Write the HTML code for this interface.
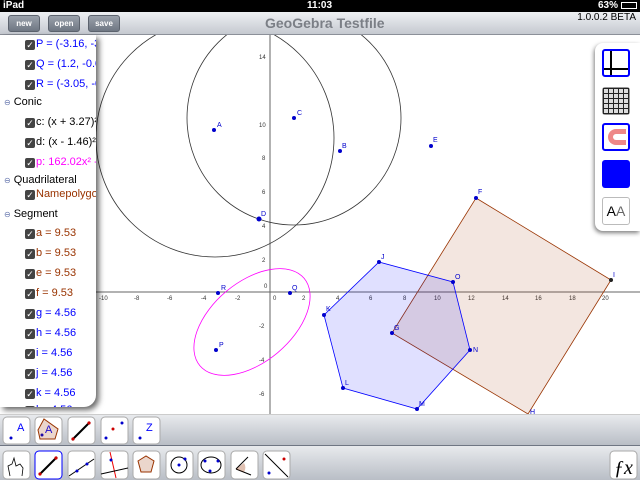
<!DOCTYPE html>
<html><head><meta charset="utf-8"><style>
*{margin:0;padding:0;box-sizing:border-box}
body{width:640px;height:480px;overflow:hidden;position:relative;background:#fff;font-family:"Liberation Sans",sans-serif}
.status{position:absolute;left:0;top:0;width:640px;height:12px;background:#000;color:#fff;font-size:10px;font-weight:bold}
.top{position:absolute;left:0;top:12px;width:640px;height:23px;background:linear-gradient(#eef0f3,#c5c9d0);border-bottom:1px solid #8c9099}
.btn{position:absolute;top:3px;height:17px;width:32px;border-radius:3px;background:linear-gradient(#9aa1ab,#6f7783);border:1px solid #5c636e;color:#fff;font-size:8px;font-weight:bold;text-align:center;line-height:15px}
.title{position:absolute;left:265px;top:3px;font-size:14px;font-weight:bold;color:#7b7f86}
.ver{position:absolute;right:4px;top:0;font-size:10px;color:#000}
.panel{position:absolute;left:0;top:35px;width:96px;height:372px;background:#fff;border-bottom-right-radius:12px;box-shadow:3px 3px 6px rgba(0,0,0,.6);overflow:hidden;font-size:11px}
.row{position:absolute;left:25px;white-space:nowrap}
.cb{display:inline-block;width:10px;height:10px;background:#444;border-radius:2px;color:#fff;font-size:9px;line-height:10px;text-align:center;vertical-align:-1px;margin-right:1px}
.hd{position:absolute;left:4px;color:#000;font-size:11px}
.hd b{font-weight:normal;color:#6a7ab0;font-size:8px;margin-right:3px}
.side{position:absolute;left:595px;top:43px;width:45px;height:188px;background:#fff;border-radius:8px 0 0 8px;box-shadow:-1px 2px 4px rgba(0,0,0,.5)}
.bar{position:absolute;left:0;width:640px;background:linear-gradient(#e8eaed,#b9bec6)}
</style></head><body>
<div class="status"><span style="position:absolute;left:3px">iPad</span><span style="position:absolute;left:307px">11:03</span><span style="position:absolute;right:22px">63%</span><span style="position:absolute;right:3px;top:2px;width:16px;height:7px;border:1px solid #fff"></span></div>
<div class="top"><div class="btn" style="left:8px">new</div><div class="btn" style="left:48px">open</div><div class="btn" style="left:88px">save</div><div class="title">GeoGebra Testfile</div><div class="ver">1.0.0.2 BETA</div></div>

<svg style="position:absolute;left:0;top:35px" width="640" height="379" viewBox="0 35 640 379">
<g font-size="6" fill="#333" font-family="Liberation Sans">
<line x1="90" y1="292" x2="640" y2="292" stroke="#666"/>
<line x1="270" y1="35" x2="270" y2="414" stroke="#666"/>
<text x="99" y="300">-10</text><text x="134" y="300">-8</text><text x="167" y="300">-6</text><text x="201" y="300">-4</text><text x="235" y="300">-2</text><text x="273" y="300">0</text><text x="302" y="300">2</text><text x="336" y="300">4</text><text x="369" y="300">6</text><text x="403" y="300">8</text><text x="434" y="300">10</text><text x="468" y="300">12</text><text x="502" y="300">14</text><text x="535" y="300">16</text><text x="569" y="300">18</text><text x="602" y="300">20</text>
<text x="259" y="59">14</text><text x="259" y="127">10</text><text x="262" y="160">8</text><text x="262" y="194">6</text><text x="262" y="228">4</text><text x="262" y="262">2</text><text x="264" y="288">0</text><text x="259" y="328">-2</text><text x="259" y="362">-4</text><text x="259" y="396">-6</text>
</g>
<circle cx="215" cy="138" r="119" fill="none" stroke="#333" stroke-width=".8"/>
<circle cx="294" cy="118" r="107" fill="none" stroke="#333" stroke-width=".8"/>
<ellipse cx="252" cy="322" rx="68" ry="40" transform="rotate(-40 252 322)" fill="none" stroke="#f0f" stroke-width=".8"/>
<polygon points="476,198 611,280 528,414 392,333" fill="rgba(153,51,0,.12)" stroke="#993300" stroke-width=".8"/>
<polygon points="379,262 453,282 470,350 417,409 343,388 324,315" fill="rgba(0,0,255,.12)" stroke="#00f" stroke-width=".8"/>
<g fill="#00c">
<circle cx="214" cy="130" r="2"/><circle cx="294" cy="118" r="2"/><circle cx="340" cy="151" r="2"/><circle cx="431" cy="146" r="2"/><circle cx="259" cy="219" r="2.5"/><circle cx="218" cy="293" r="2"/><circle cx="290" cy="293" r="2"/><circle cx="216" cy="350" r="2"/>
<circle cx="379" cy="262" r="2"/><circle cx="453" cy="282" r="2"/><circle cx="470" cy="350" r="2"/><circle cx="417" cy="409" r="2"/><circle cx="343" cy="388" r="2"/><circle cx="324" cy="315" r="2"/><circle cx="476" cy="198" r="2"/><circle cx="392" cy="333" r="2"/></g>
<circle cx="611" cy="280" r="2" fill="#222"/>
<g font-size="7" fill="#00c" font-family="Liberation Sans">
<text x="217" y="127">A</text><text x="297" y="115">C</text><text x="342" y="148">B</text><text x="433" y="142">E</text><text x="261" y="216">D</text><text x="221" y="290">R</text><text x="292" y="290">Q</text><text x="219" y="347">P</text><text x="381" y="259">J</text><text x="455" y="279">O</text><text x="473" y="352">N</text><text x="419" y="406">M</text><text x="345" y="385">L</text><text x="326" y="311">K</text><text x="478" y="194">F</text><text x="394" y="330">G</text><text x="530" y="414">H</text><text x="613" y="277">I</text></g>
</svg>

<div class="panel">
<div class="row" style="top:3px;color:#00f"><span class="cb">✓</span>P = (-3.16, -3.</div>
<div class="row" style="top:23px;color:#00f"><span class="cb">✓</span>Q = (1.2, -0.09</div>
<div class="row" style="top:43px;color:#00f"><span class="cb">✓</span>R = (-3.05, -0.</div>
<div class="hd" style="top:61px"><b>⊖</b>Conic</div>
<div class="row" style="top:81px"><span class="cb">✓</span>c: (x + 3.27)² +</div>
<div class="row" style="top:101px"><span class="cb">✓</span>d: (x - 1.46)² +</div>
<div class="row" style="top:121px;color:#f0f"><span class="cb">✓</span>p: 162.02x² - </div>
<div class="hd" style="top:139px"><b>⊖</b>Quadrilateral</div>
<div class="row" style="top:153px;color:#993300"><span class="cb">✓</span>Namepolygon</div>
<div class="hd" style="top:173px"><b>⊖</b>Segment</div>
<div class="row" style="top:192px;color:#993300"><span class="cb">✓</span>a = 9.53</div>
<div class="row" style="top:212px;color:#993300"><span class="cb">✓</span>b = 9.53</div>
<div class="row" style="top:232px;color:#993300"><span class="cb">✓</span>e = 9.53</div>
<div class="row" style="top:252px;color:#993300"><span class="cb">✓</span>f = 9.53</div>
<div class="row" style="top:272px;color:#00f"><span class="cb">✓</span>g = 4.56</div>
<div class="row" style="top:292px;color:#00f"><span class="cb">✓</span>h = 4.56</div>
<div class="row" style="top:312px;color:#00f"><span class="cb">✓</span>i = 4.56</div>
<div class="row" style="top:332px;color:#00f"><span class="cb">✓</span>j = 4.56</div>
<div class="row" style="top:352px;color:#00f"><span class="cb">✓</span>k = 4.56</div>
<div class="row" style="top:369px;color:#00f"><span class="cb">✓</span>l = 4.56</div>
</div>

<div class="side">
<div style="position:absolute;left:7px;top:6px;width:28px;height:28px;border:2px solid #00f;border-radius:3px"><div style="position:absolute;left:6px;top:0;width:2px;height:24px;background:#000"></div><div style="position:absolute;left:0;top:17px;width:24px;height:2px;background:#000"></div></div>
<div style="position:absolute;left:7px;top:44px;width:28px;height:28px;border-radius:3px;border:1px solid #999;background:repeating-linear-gradient(90deg,#222 0 1px,#ddd 1px 5px)"><div style="position:absolute;inset:0;background:repeating-linear-gradient(0deg,#222 0 1px,transparent 1px 5px)"></div></div>
<div style="position:absolute;left:7px;top:80px;width:28px;height:28px;border:2px solid #00f;border-radius:3px"><div style="position:absolute;left:4px;top:4px;width:18px;height:16px;border:5px solid #e88;border-right:none;border-radius:8px 0 0 8px"></div></div>
<div style="position:absolute;left:7px;top:117px;width:28px;height:28px;background:#00f;border-radius:3px"></div>
<div style="position:absolute;left:7px;top:154px;width:28px;height:28px;border:1px solid #bbb;border-radius:3px;font-size:14px;text-align:center;line-height:26px">A<span style="color:#666">A</span></div>
</div>

<div class="bar" style="top:414px;height:32px;border-bottom:1px solid #6f7683;border-top:1px solid #ccc"></div>
<div class="bar" style="top:446px;height:34px"></div>
<svg style="position:absolute;left:0;top:414px" width="640" height="66">
<g fill="#fff" stroke="#aaa"><rect x="3" y="3" width="27" height="27" rx="4"/><rect x="35" y="3" width="27" height="27" rx="4"/><rect x="68" y="3" width="27" height="27" rx="4"/><rect x="101" y="3" width="27" height="27" rx="4"/><rect x="133" y="3" width="27" height="27" rx="4"/>
<rect x="3" y="37" width="27" height="28" rx="4"/><rect x="35" y="37" width="27" height="28" rx="4" stroke="#00f"/><rect x="68" y="37" width="27" height="28" rx="4"/><rect x="101" y="37" width="27" height="28" rx="4"/><rect x="133" y="37" width="27" height="28" rx="4"/><rect x="166" y="37" width="27" height="28" rx="4"/><rect x="198" y="37" width="27" height="28" rx="4"/><rect x="231" y="37" width="27" height="28" rx="4"/><rect x="263" y="37" width="27" height="28" rx="4"/><rect x="610" y="37" width="27" height="28" rx="4"/></g>
<g fill="#00c"><circle cx="11" cy="24" r="1.5"/><circle cx="42" cy="21" r="1.5"/><circle cx="106" cy="24" r="1.5"/><circle cx="122" cy="9" r="1.5"/><circle cx="140" cy="24" r="1.5"/></g>
<g font-size="11" fill="#00f" font-family="Liberation Sans"><text x="17" y="17">A</text><text x="45" y="19">A</text><text x="146" y="17">Z</text></g>
<polygon points="38,16 44,5 58,15 55,25 40,25" fill="rgba(153,51,0,.2)" stroke="#993300"/>
<circle cx="113" cy="15" r="1.5" fill="#c00"/>
<line x1="72" y1="26" x2="90" y2="8" stroke="#000" stroke-width="2"/><circle cx="89" cy="9" r="1.6" fill="#c00"/><circle cx="73" cy="25" r="1.6" fill="#c00"/>
<line x1="40" y1="60" x2="57" y2="43" stroke="#000" stroke-width="2"/><circle cx="56" cy="44" r="1.6" fill="#c00"/><circle cx="40" cy="60" r="1.6" fill="#c00"/>
<path d="M10 62 L8 52 L12 50 L14 44 L16 52 L20 50 L23 54 L22 62" fill="none" stroke="#000" stroke-width=".8"/>
<line x1="69" y1="62" x2="94" y2="45" stroke="#000"/><circle cx="77" cy="57" r="1.5" fill="#00c"/><circle cx="87" cy="50" r="1.5" fill="#00c"/>
<line x1="110" y1="38" x2="116" y2="64" stroke="#e00"/><line x1="101" y1="60" x2="128" y2="54" stroke="#000"/><circle cx="111" cy="46" r="1.5" fill="#00c"/>
<polygon points="138,47 146,42 154,47 151,58 141,58" fill="rgba(153,51,0,.2)" stroke="#993300"/>
<circle cx="179" cy="51" r="8" fill="none" stroke="#000"/><circle cx="179" cy="51" r="1.5" fill="#00c"/><circle cx="185" cy="45" r="1.5" fill="#00c"/>
<ellipse cx="211" cy="51" rx="10" ry="8" fill="none" stroke="#000"/><circle cx="205" cy="47" r="1.5" fill="#00c"/><circle cx="218" cy="47" r="1.5" fill="#00c"/><circle cx="210" cy="57" r="1.5" fill="#00c"/>
<path d="M236 55 L248 43 M236 55 L251 61" stroke="#000" fill="none"/><path d="M236 55 L244 49 A8 8 0 0 1 244 58Z" fill="rgba(153,51,0,.3)"/>
<line x1="265" y1="40" x2="288" y2="63" stroke="#000"/><circle cx="284" cy="45" r="1.5" fill="#c00"/><circle cx="269" cy="59" r="1.5" fill="#00c"/>
<text x="614" y="60" font-size="20" font-style="italic" font-family="Liberation Serif">ƒx</text>
</svg>
</body></html>
